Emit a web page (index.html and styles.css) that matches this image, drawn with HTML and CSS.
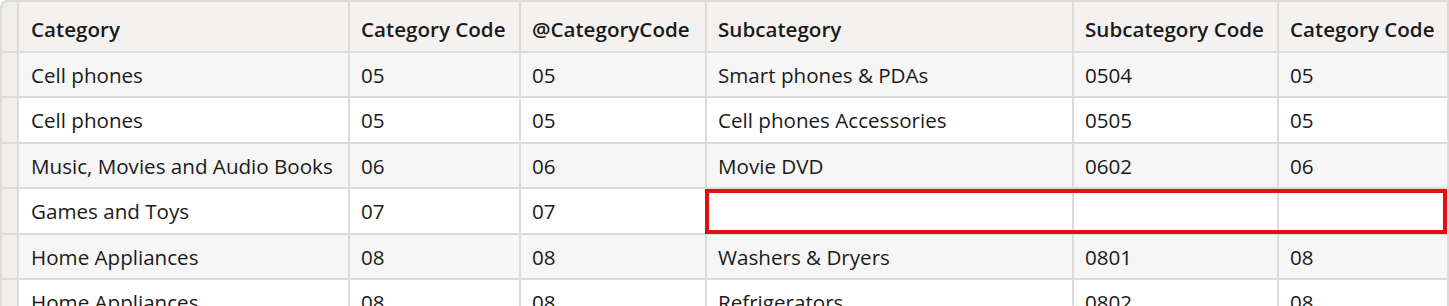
FILE: index.html
```html
<!DOCTYPE html>
<html>
<head>
<meta charset="utf-8">
<link rel="stylesheet" href="styles.css">
</head>
<body>
<div class="grid">
  <div class="rh hd"></div>
  <div class="cell hd c1">Category</div>
  <div class="cell hd">Category Code</div>
  <div class="cell hd">@CategoryCode</div>
  <div class="cell hd">Subcategory</div>
  <div class="cell hd">Subcategory Code</div>
  <div class="cell hd">Category Code</div>

  <div class="rh"></div>
  <div class="cell alt c1">Cell phones</div>
  <div class="cell alt">05</div>
  <div class="cell alt">05</div>
  <div class="cell alt">Smart phones &amp; PDAs</div>
  <div class="cell alt">0504</div>
  <div class="cell alt">05</div>

  <div class="rh"></div>
  <div class="cell c1">Cell phones</div>
  <div class="cell">05</div>
  <div class="cell">05</div>
  <div class="cell">Cell phones Accessories</div>
  <div class="cell">0505</div>
  <div class="cell">05</div>

  <div class="rh"></div>
  <div class="cell alt c1">Music, Movies and Audio Books</div>
  <div class="cell alt">06</div>
  <div class="cell alt">06</div>
  <div class="cell alt">Movie DVD</div>
  <div class="cell alt">0602</div>
  <div class="cell alt">06</div>

  <div class="rh"></div>
  <div class="cell c1">Games and Toys</div>
  <div class="cell">07</div>
  <div class="cell">07</div>
  <div class="missing">
    <div class="cell"></div>
    <div class="cell"></div>
    <div class="cell"></div>
  </div>

  <div class="rh"></div>
  <div class="cell alt c1">Home Appliances</div>
  <div class="cell alt">08</div>
  <div class="cell alt">08</div>
  <div class="cell alt">Washers &amp; Dryers</div>
  <div class="cell alt">0801</div>
  <div class="cell alt">08</div>

  <div class="rh"></div>
  <div class="cell c1">Home Appliances</div>
  <div class="cell">08</div>
  <div class="cell">08</div>
  <div class="cell">Refrigerators</div>
  <div class="cell">0802</div>
  <div class="cell">08</div>
</div>
</body>
</html>
```
FILE: styles.css
```css
html, body {
  margin: 0;
  padding: 0;
  background: #ffffff;
  overflow: hidden;
}
body {
  width: 1449px;
  height: 306px;
}
.grid {
  display: grid;
  grid-template-columns: 15px 329px 169px 184px 365px 203px 168px;
  grid-template-rows: 49px 43px 44px 43px 44px 43px 44px;
  gap: 2px;
  background: #dcdbda;
  border: 2px solid #dcdbda;
  border-bottom: none;
  border-top-left-radius: 7px;
  overflow: hidden;
  font-family: "Open Sans", "Noto Sans", sans-serif;
  font-size: 20.6px;
  color: #1b1a19;
}
.rh {
  background: #efeeed;
}
.cell {
  background: #ffffff;
  display: flex;
  align-items: center;
  padding: 0 11px;
  white-space: nowrap;
  overflow: hidden;
}
.cell.c1 {
  padding-left: 12px;
}
.cell.alt {
  background: #f6f6f6;
}
.cell.hd {
  background: #f3f2f1;
  font-weight: 600;
  padding-top: 4px;
}
.missing {
  grid-column: span 3;
  display: grid;
  grid-template-columns: 365px 203px 168px;
  gap: 2px;
  position: relative;
}
.missing::after {
  content: "";
  position: absolute;
  top: 0;
  bottom: -1px;
  left: -2px;
  right: 0;
  border: 4px solid #e30e0e;
}
```
